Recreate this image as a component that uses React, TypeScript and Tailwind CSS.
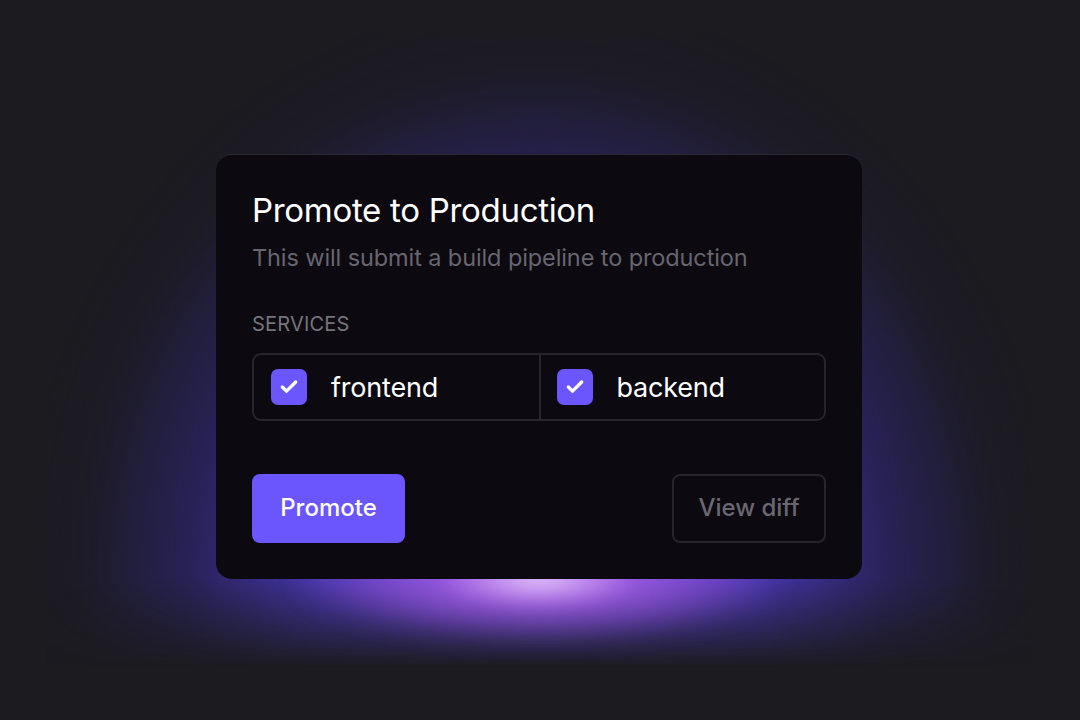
import { Check } from "lucide-react";

const services = ["frontend", "backend"];

const App = () => {
  return (
    <div
      className="w-[1080px] h-[720px] bg-[#1c1b20] flex items-center justify-center overflow-hidden"
      style={{ fontFamily: "Inter, 'Noto Sans', sans-serif" }}
    >
      <div className="relative mt-[12px] mr-[2px]">
        {/* glow layers behind the card */}
        <div className="absolute -left-[170px] -right-[170px] -top-[120px] -bottom-[88px] bg-[radial-gradient(ellipse_520px_580px_at_50%_86%,rgba(98,78,235,1),rgba(78,60,205,0.8)_42%,rgba(55,42,150,0.45)_68%,rgba(35,30,80,0.12)_88%,transparent_100%)] [mask-image:linear-gradient(to_bottom,black_86%,transparent_100%)]" />
        <div className="absolute left-[80px] right-[80px] bottom-[-60px] h-[120px] rounded-full bg-[radial-gradient(ellipse_at_50%_50%,rgba(205,115,245,0.9),rgba(165,85,220,0.5)_45%,transparent_72%)] blur-[12px]" />
        <div className="absolute left-[230px] right-[230px] bottom-[-26px] h-[52px] rounded-full bg-[radial-gradient(ellipse_at_50%_50%,rgba(235,215,250,0.85),rgba(200,160,235,0.4)_50%,transparent_75%)] blur-[8px]" />

        <div className="relative w-[646px] h-[425px] rounded-[16px] bg-[#0c0a10] border-t border-[#2a2833] px-[36px] pt-[35px]">
          <h1 className="text-[33px] leading-[40px] text-white tracking-[-0.3px]">
            Promote to Production
          </h1>
          <p className="mt-[13px] text-[23.5px] leading-[30px] text-[#68656f] tracking-[-0.1px]">
            This will submit a build pipeline to production
          </p>

          <div className="mt-[39px] text-[20px] leading-[24px] text-[#77737d] tracking-[0.2px]">
            SERVICES
          </div>
          <div className="mt-[17px] flex h-[68px] rounded-[9px] border-2 border-[#26242c]">
            {services.map((s, i) => (
              <div
                key={s}
                className={
                  i === 0
                    ? "flex-1 flex items-center gap-[24px] pl-[17px] border-r-2 border-[#26242c]"
                    : "flex-1 flex items-center gap-[24px] pl-[16px]"
                }
              >
                <div className="w-[36px] h-[36px] rounded-[7px] bg-[#6b55fd] flex items-center justify-center">
                  <Check className="w-[20px] h-[20px] text-white" strokeWidth={4} />
                </div>
                <span className="text-[27px] text-white leading-none pt-[2px] tracking-[-0.2px]">{s}</span>
              </div>
            ))}
          </div>

          <div className="mt-[53px] flex justify-between">
            <button className="w-[153px] h-[69px] rounded-[8px] bg-[#6b55fd] text-white text-[24px] font-medium">
              Promote
            </button>
            <button className="w-[154px] h-[69px] rounded-[8px] border-2 border-[#26242c] text-[#6a6770] text-[24px] font-medium">
              View diff
            </button>
          </div>
        </div>
      </div>
    </div>
  );
};

export default App;
